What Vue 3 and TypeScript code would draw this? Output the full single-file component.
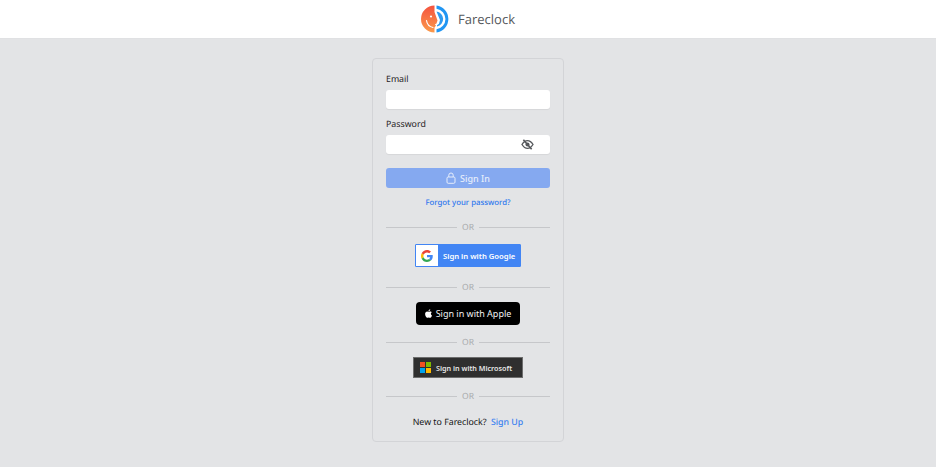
<script setup lang="ts">
const orText = 'OR'
</script>

<template>
  <div class="page">
    <header class="topbar">
      <svg class="logo" width="28" height="28" viewBox="0 0 28 28">
        <defs>
          <linearGradient id="red" x1="0" y1="0" x2="0" y2="1">
            <stop offset="0" stop-color="#f4533f" />
            <stop offset="1" stop-color="#fb9a4b" />
          </linearGradient>
        </defs>
        <path d="M13.500 .5A13.500 13.500 0 0 0 13.500 27.500V22.500L15 20.500L13.800 19.500L15.500 18.500L16.500 15.500L13.500 7Z" fill="url(#red)" />
        <circle cx="10" cy="11.500" r="1.100" fill="#fff" />
        <path d="M5.500 15.500C6 19 8.500 21.800 12 22.500" fill="none" stroke="#fff" stroke-width="1.200" stroke-linecap="round" />
        <path d="M15.500 .6A13.500 13.500 0 0 1 15.500 27.400V24.300A10.400 10.400 0 0 0 15.500 3.700Z" fill="#2196f3" />
        <path d="M15.500 6.500A7.600 7.600 0 0 1 16 21.500V20.200L18 18.800L19 15L15.500 6.500Z" fill="#2f9bf0" />
      </svg>
      <span class="brand">Fareclock</span>
    </header>

    <main class="main">
      <form class="card" @submit.prevent>
        <label class="label">Email</label>
        <div class="input"></div>
        <label class="label label-pass">Password</label>
        <div class="input input-pass">
          <svg width="13" height="11" viewBox="0 0 14 12" fill="none" stroke="#55585b" stroke-width="1.500">
            <path d="M1 6C3 2.800 5 1.800 7 1.800S11 2.800 13 6C11 9.200 9 10.200 7 10.200S3 9.200 1 6Z" />
            <circle cx="7" cy="6" r="2.200" fill="#55585b" stroke="none" />
            <path d="M2.500 .8L11.500 11.200" stroke-width="1.800" />
          </svg>
        </div>

        <button class="signin" type="button">
          <svg width="10" height="12" viewBox="0 0 10 12" fill="none" stroke="#e6edfb" stroke-width="1">
            <rect x="1" y="5" width="8" height="6.300" rx="1.200" />
            <path d="M2.800 5V3.200a2.200 2.200 0 0 1 4.400 0V5" />
          </svg>
          Sign In
        </button>
        <a class="forgot">Forgot your password?</a>

        <div class="or or-first"><span>{{ orText }}</span></div>

        <button class="google" type="button">
          <span class="g-box">
            <svg width="12" height="12" viewBox="0 0 48 48">
              <path fill="#EA4335" d="M24 9.500c3.500 0 6.700 1.300 9.100 3.500l6.800-6.800C35.800 2.400 30.200 0 24 0 14.600 0 6.500 5.400 2.600 13.200l7.900 6.100C12.400 13.600 17.700 9.500 24 9.500z" />
              <path fill="#4285F4" d="M47 24.500c0-1.600-.1-3.100-.4-4.500H24v9h12.900c-.6 3-2.300 5.500-4.800 7.200l7.700 6C44.300 37.900 47 31.800 47 24.500z" />
              <path fill="#FBBC05" d="M10.500 28.700c-.5-1.500-.8-3-.8-4.700s.3-3.200.8-4.700l-7.900-6.100C.9 16.500 0 20.100 0 24s.9 7.500 2.600 10.800l7.900-6.100z" />
              <path fill="#34A853" d="M24 48c6.500 0 11.900-2.100 15.800-5.800l-7.700-6c-2.100 1.400-4.900 2.300-8.100 2.300-6.300 0-11.600-4.100-13.500-9.800l-7.900 6.100C6.500 42.600 14.600 48 24 48z" />
            </svg>
          </span>
          <span class="g-text">Sign in with Google</span>
        </button>

        <div class="or or-apple"><span>{{ orText }}</span></div>

        <button class="apple" type="button">
          <svg width="7" height="9" viewBox="0 0 814 1000" fill="#fff">
            <path d="M788 341c-6 4-107 61-107 188 0 147 129 199 133 200-1 3-21 71-68 141-42 61-86 122-153 122s-85-39-162-39c-76 0-103 40-164 40s-104-56-153-125C57 787 11 664 11 547c0-188 122-288 243-288 64 0 118 42 158 42 38 0 98-45 171-45 28 0 128 3 205 85zM554 165c31-36 52-87 52-137 0-7-1-14-2-20-50 2-109 33-145 75-28 32-54 83-54 134 0 8 1 15 2 18 3 1 9 2 14 2 45 0 101-30 133-72z" />
          </svg>
          <span>Sign in with Apple</span>
        </button>

        <div class="or or-ms"><span>{{ orText }}</span></div>

        <button class="microsoft" type="button">
          <span class="ms-logo"><i class="r"></i><i class="g"></i><i class="b"></i><i class="y"></i></span>
          <span>Sign in with Microsoft</span>
        </button>

        <div class="or or-last"><span>{{ orText }}</span></div>

        <p class="signup">New to Fareclock? <a>Sign Up</a></p>
      </form>
    </main>
  </div>
</template>

<style>
html, body {
  margin: 0;
  background: #fff;
}
</style>

<style scoped>
.page {
  width: 936px;
  height: 470px;
  display: flex;
  flex-direction: column;
  overflow: hidden;
  font-family: "Noto Sans", "Open Sans", sans-serif;
  text-rendering: geometricPrecision;
}

.topbar {
  height: 38px;
  flex: none;
  background: #fff;
  display: flex;
  align-items: center;
  justify-content: center;
  gap: 9px;
  border-bottom: 1px solid #e0e1e3;
}

.logo { flex: none; }

.brand {
  font-family: "Open Sans", sans-serif;
  font-size: 13px;
  color: #55585c;
}

.main {
  height: 428px;
  flex: none;
  background: #e3e4e6;
  padding-top: 19px;
  box-sizing: border-box;
  display: flex;
  justify-content: center;
}

.card {
  width: 192px;
  height: 384px;
  box-sizing: border-box;
  padding: 14px 13px 0;
  border: 1px solid #d3d4d7;
  border-radius: 4px;
  display: flex;
  flex-direction: column;
  align-items: center;
}

.label {
  align-self: stretch;
  font-size: 8.800px;
  line-height: 13px;
  color: #1f2124;
  height: 13px;
}

.label-pass { margin-top: 9px; }

.input {
  align-self: stretch;
  height: 19px;
  margin-top: 4px;
  background: #fff;
  border-radius: 3px;
  box-shadow: 0 1px 1px rgba(0, 0, 0, .06);
  flex: none;
}

.input-pass {
  display: flex;
  align-items: center;
  justify-content: flex-end;
  padding-right: 16px;
  margin-top: 4px;
}

.signin {
  align-self: stretch;
  height: 20px;
  margin-top: 14px;
  flex: none;
  border: none;
  border-radius: 3px;
  background: #85a9f0;
  color: #e6edfb;
  font: 500 9px "Noto Sans", sans-serif;
  display: flex;
  align-items: center;
  justify-content: center;
  gap: 4px;
  padding: 0;
}

.forgot {
  margin-top: 9px;
  font-size: 7.800px;
  font-weight: 500;
  line-height: 12px;
  color: #2f78ee;
}

.or {
  align-self: stretch;
  display: flex;
  align-items: center;
  gap: 5px;
  height: 12px;
  color: #a9abae;
  font-size: 8.500px;
  flex: none;
}
.or::before, .or::after {
  content: "";
  flex: 1;
  height: 1px;
  background: #c6c7ca;
}
.or-first { margin-top: 12px; }
.or-apple { margin-top: 14px; }
.or-ms { margin-top: 11px; }
.or-last { margin-top: 12px; }

.google {
  width: 106px;
  height: 23px;
  margin-top: 11px;
  flex: none;
  padding: 0;
  border: 1px solid #4285f4;
  background: #4285f4;
  border-radius: 1px;
  display: flex;
  align-items: stretch;
  color: #fff;
  font: 600 7.700px "Noto Sans", sans-serif;
}
.g-box {
  width: 22px;
  background: #fff;
  display: flex;
  align-items: center;
  justify-content: center;
}
.g-text {
  align-self: center;
  margin-left: 5px;
}

.apple {
  width: 104px;
  height: 23px;
  margin-top: 9px;
  flex: none;
  padding: 0;
  border: none;
  border-radius: 4px;
  background: #000;
  color: #f2f2f2;
  font: 400 9px "Noto Sans", sans-serif;
  display: flex;
  align-items: center;
  justify-content: center;
  gap: 4px;
}

.microsoft {
  width: 110px;
  height: 21px;
  margin-top: 9px;
  flex: none;
  padding: 0 0 0 6px;
  border: 1px solid #6d6d6d;
  background: #2f2f2f;
  color: #e8e8e8;
  font: 600 7.200px "Noto Sans", sans-serif;
  display: flex;
  align-items: center;
  gap: 5px;
}
.ms-logo {
  width: 11px;
  height: 11px;
  display: grid;
  grid-template-columns: 1fr 1fr;
  gap: 1px;
}
.ms-logo i { display: block; }
.r { background: #f25022; }
.g { background: #7fba00; }
.b { background: #00a4ef; }
.y { background: #ffb900; }

.signup {
  margin: 14px 0 0;
  font-size: 8.800px;
  line-height: 13px;
  color: #111;
}
.signup a {
  margin-left: 2px;
  color: #3b82f0;
  font-weight: 500;
}
</style>
